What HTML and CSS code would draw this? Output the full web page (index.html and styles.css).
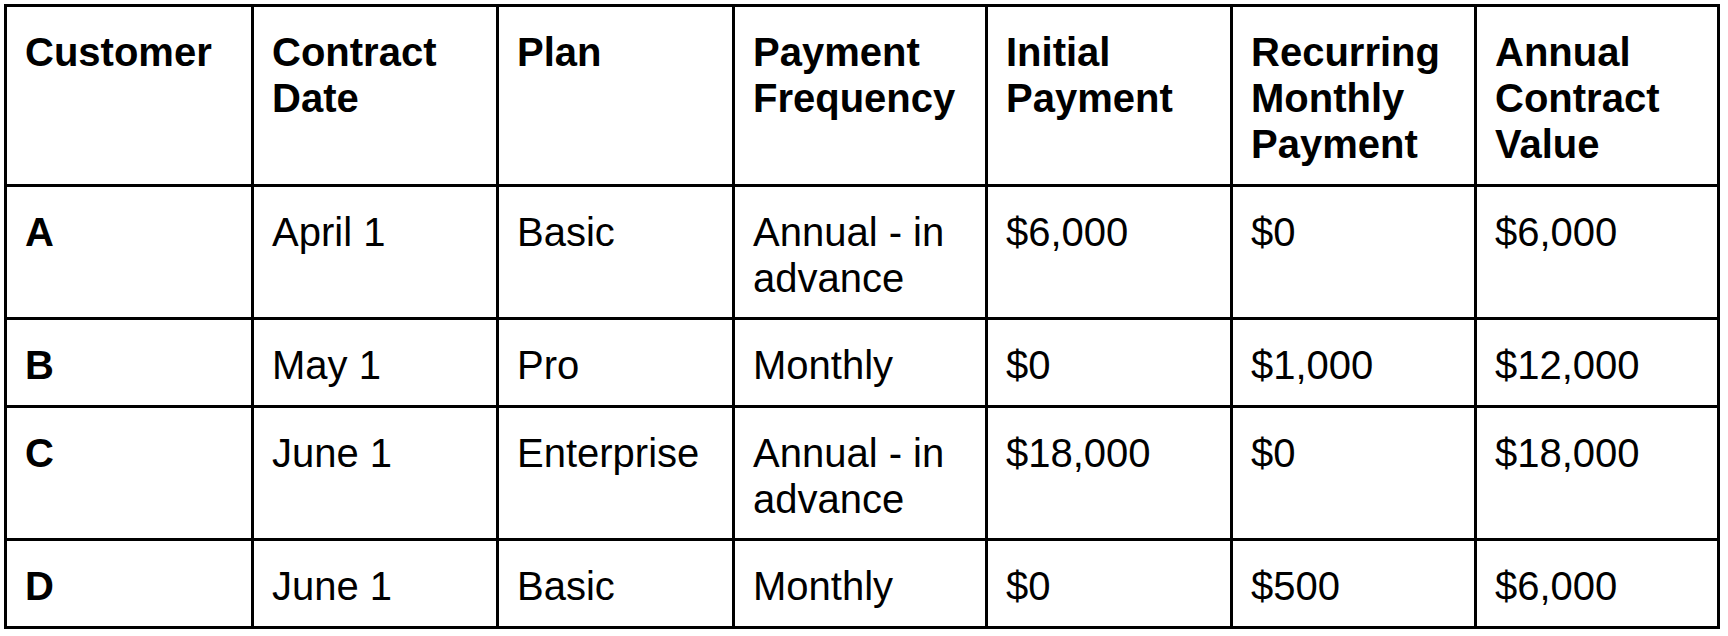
FILE: index.html
```html
<!DOCTYPE html>
<html lang="en">
<head>
<meta charset="utf-8">
<title>Contracts</title>
<link rel="stylesheet" href="styles.css">
</head>
<body>
<table class="contracts">
  <thead>
    <tr>
      <th class="c1">Customer</th>
      <th class="c2">Contract Date</th>
      <th class="c3">Plan</th>
      <th class="c4">Payment Frequency</th>
      <th class="c5">Initial Payment</th>
      <th class="c6">Recurring Monthly Payment</th>
      <th class="c7">Annual Contract Value</th>
    </tr>
  </thead>
  <tbody>
    <tr>
      <td class="key">A</td>
      <td>April 1</td>
      <td>Basic</td>
      <td>Annual - in advance</td>
      <td>$6,000</td>
      <td>$0</td>
      <td>$6,000</td>
    </tr>
    <tr>
      <td class="key">B</td>
      <td>May 1</td>
      <td>Pro</td>
      <td>Monthly</td>
      <td>$0</td>
      <td>$1,000</td>
      <td>$12,000</td>
    </tr>
    <tr>
      <td class="key">C</td>
      <td>June 1</td>
      <td>Enterprise</td>
      <td>Annual - in advance</td>
      <td>$18,000</td>
      <td>$0</td>
      <td>$18,000</td>
    </tr>
    <tr>
      <td class="key">D</td>
      <td>June 1</td>
      <td>Basic</td>
      <td>Monthly</td>
      <td>$0</td>
      <td>$500</td>
      <td>$6,000</td>
    </tr>
  </tbody>
</table>
</body>
</html>
```
FILE: styles.css
```css
html, body {
  margin: 0;
  padding: 0;
  background: #ffffff;
}

body {
  padding: 4px;
  font-family: "Liberation Sans", Arial, sans-serif;
  color: #000000;
}

.contracts {
  border-collapse: separate;
  border-spacing: 0;
  table-layout: fixed;
  width: 1716px;
  border-top: 3px solid #000;
  border-left: 3px solid #000;
}

.contracts th,
.contracts td {
  box-sizing: border-box;
  border-right: 3px solid #000;
  border-bottom: 3px solid #000;
  padding: 22px 18px 16.5px 18px;
  font-size: 40px;
  line-height: 46px;
  text-align: left;
  vertical-align: top;
  font-weight: 400;
}

.contracts th {
  font-weight: 700;
}

.contracts td.key {
  font-weight: 700;
}

.c1 { width: 247px; }
.c2 { width: 245px; }
.c3 { width: 236px; }
.c4 { width: 253px; }
.c5 { width: 245px; }
.c6 { width: 244px; }
.c7 { width: 243px; }
```
